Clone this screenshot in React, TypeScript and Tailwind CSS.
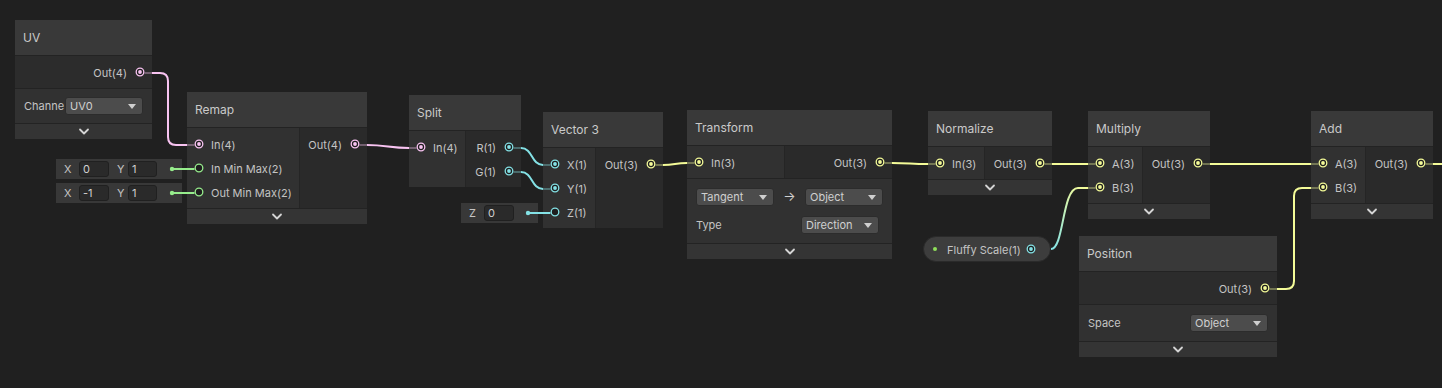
import React from "react";

const V4 = "#f8c3f1";
const V3 = "#f4fb98";
const V2 = "#96ec8c";
const V1 = "#84e2e6";

const Port = ({ color, on = true }: { color: string; on?: boolean }) => (
  <svg width="10" height="10" viewBox="0 0 10 10" className="shrink-0">
    <circle cx="5" cy="5" r="3.8" fill="#1e1e1e" stroke={color} strokeWidth="1.3" />
    {on && <circle cx="5" cy="5" r="1.9" fill={color} />}
  </svg>
);

const Chevron = () => (
  <svg width="12" height="8" viewBox="0 0 12 8">
    <polyline points="2,1.5 6,5.5 10,1.5" fill="none" stroke="#d4d4d4" strokeWidth="1.8" strokeLinecap="round" strokeLinejoin="round" />
  </svg>
);

const Footer = () => (
  <div className="h-4 flex items-center justify-center bg-[#343434] border-t border-[#232323]">
    <Chevron />
  </div>
);

const Header = ({ title }: { title: string }) => (
  <div className="h-9 flex items-center px-2 bg-[#393939] border-b border-[#232323] text-[12px] text-[#cacaca]">
    {title}
  </div>
);

const InRow = ({ label, color, on = true }: { label: string; color: string; on?: boolean }) => (
  <div className="h-6 flex items-center pl-[7px] gap-[7px] whitespace-nowrap">
    <Port color={color} on={on} />
    <span className="relative top-[1px]">{label}</span>
  </div>
);

const OutRow = ({ label, color }: { label: string; color: string }) => (
  <div className="h-6 flex items-center justify-end pr-[7px] gap-[8px] whitespace-nowrap">
    <span className="relative top-[1px]">{label}</span>
    <Port color={color} />
  </div>
);

const Dropdown = ({ value }: { value: string }) => (
  <div className="w-[78px] h-[18px] flex items-center justify-between pl-[4px] pr-[6px] rounded-[3px] bg-[#4c4c4c] border border-[#2c2c2c] text-[#d0d0d0]">
    <span>{value}</span>
    <svg width="8" height="5" viewBox="0 0 8 5">
      <polygon points="0,0 8,0 4,5" fill="#cfcfcf" />
    </svg>
  </div>
);

const Field = ({ value, w }: { value: string; w: string }) => (
  <div className={`${w} h-[16px] flex items-center pl-[3px] rounded-[3px] bg-[#2a2a2a] border border-[#202020] text-[#d0d0d0]`}>
    {value}
  </div>
);

export default function App() {
  return (
    <div
      className="relative w-[1442px] h-[388px] overflow-hidden bg-[#202020] text-[11px] text-[#c4c4c4]"
      style={{ fontFamily: "Inter, 'Noto Sans', sans-serif" }}
    >
      {/* UV */}
      <div className="absolute left-[15px] top-[20px] w-[137px] flex flex-col">
        <Header title="UV" />
        <div className="py-1 bg-[#2c2c2c]">
          <OutRow label="Out(4)" color={V4} />
        </div>
        <div className="h-[35px] flex items-center justify-between pl-[9px] pr-[9px] bg-[#313131] border-t border-[#232323]">
          <span className="whitespace-nowrap">Channe</span>
          <Dropdown value="UV0" />
        </div>
        <Footer />
      </div>

      {/* Remap */}
      <div className="absolute left-[187px] top-[92px] w-[180px] flex flex-col">
        <Header title="Remap" />
        <div className="flex">
          <div className="w-[113px] py-1 bg-[#313131] border-r border-[#252525]">
            <InRow label="In(4)" color={V4} />
            <InRow label="In Min Max(2)" color={V2} on={false} />
            <InRow label="Out Min Max(2)" color={V2} on={false} />
          </div>
          <div className="flex-1 py-1 bg-[#2a2a2a]">
            <OutRow label="Out(4)" color={V4} />
          </div>
        </div>
        <Footer />
      </div>

      {/* Remap inline values */}
      <div className="absolute left-[56px] top-[159px] w-[126px] h-[20px] flex items-center pl-[8px] bg-[#383838]">
        <span className="w-[15px]">X</span>
        <Field value="0" w="w-[30px]" />
        <span className="w-[19px] pl-[8px]">Y</span>
        <Field value="1" w="w-[29px]" />
      </div>
      <div className="absolute left-[56px] top-[183px] w-[126px] h-[20px] flex items-center pl-[8px] bg-[#383838]">
        <span className="w-[15px]">X</span>
        <Field value="-1" w="w-[30px]" />
        <span className="w-[19px] pl-[8px]">Y</span>
        <Field value="1" w="w-[29px]" />
      </div>

      {/* Split */}
      <div className="absolute left-[409px] top-[95px] w-[112px] flex flex-col">
        <Header title="Split" />
        <div className="flex h-[56px]">
          <div className="w-[57px] py-1 bg-[#313131] border-r border-[#252525]">
            <InRow label="In(4)" color={V4} />
          </div>
          <div className="flex-1 py-1 bg-[#2a2a2a]">
            <OutRow label="R(1)" color={V1} />
            <OutRow label="G(1)" color={V1} />
          </div>
        </div>
      </div>

      {/* Vector 3 */}
      <div className="absolute left-[543px] top-[112px] w-[120px] flex flex-col">
        <Header title="Vector 3" />
        <div className="flex">
          <div className="w-[53px] py-1 bg-[#313131] border-r border-[#252525]">
            <InRow label="X(1)" color={V1} />
            <InRow label="Y(1)" color={V1} />
            <InRow label="Z(1)" color={V1} on={false} />
          </div>
          <div className="flex-1 py-1 bg-[#2a2a2a]">
            <OutRow label="Out(3)" color={V3} />
          </div>
        </div>
      </div>

      {/* Vector 3 inline value */}
      <div className="absolute left-[461px] top-[203px] w-[77px] h-[20px] flex items-center pl-[8px] bg-[#383838]">
        <span className="w-[15px]">Z</span>
        <Field value="0" w="w-[30px]" />
      </div>

      {/* Transform */}
      <div className="absolute left-[687px] top-[110px] w-[205px] flex flex-col">
        <Header title="Transform" />
        <div className="flex">
          <div className="w-[98px] py-1 bg-[#313131] border-r border-[#252525]">
            <InRow label="In(3)" color={V3} />
          </div>
          <div className="flex-1 py-1 bg-[#2a2a2a]">
            <OutRow label="Out(3)" color={V3} />
          </div>
        </div>
        <div className="py-1 pl-[9px] pr-[9px] bg-[#313131] border-t border-[#232323]">
          <div className="h-7 flex items-center justify-between">
            <Dropdown value="Tangent" />
            <span className="text-[13px] text-[#cfcfcf]">→</span>
            <Dropdown value="Object" />
          </div>
          <div className="h-7 flex items-center justify-between pr-[4px]">
            <span>Type</span>
            <Dropdown value="Direction" />
          </div>
        </div>
        <Footer />
      </div>

      {/* Normalize */}
      <div className="absolute left-[928px] top-[111px] w-[124px] flex flex-col">
        <Header title="Normalize" />
        <div className="flex">
          <div className="w-[57px] py-1 bg-[#313131] border-r border-[#252525]">
            <InRow label="In(3)" color={V3} />
          </div>
          <div className="flex-1 py-1 bg-[#2a2a2a]">
            <OutRow label="Out(3)" color={V3} />
          </div>
        </div>
        <Footer />
      </div>

      {/* Fluffy Scale property */}
      <div className="absolute left-[923px] top-[236px] w-[128px] h-[26px] flex items-center pl-[9px] pr-[14px] rounded-full bg-[#3d3d3d] border border-[#2a2a2a]">
        <span className="w-[4px] h-[4px] rounded-full bg-[#8fe05a]" />
        <span className="ml-[10px] flex-1 whitespace-nowrap relative top-[1px]">Fluffy Scale(1)</span>
        <Port color={V1} />
      </div>

      {/* Multiply */}
      <div className="absolute left-[1088px] top-[111px] w-[122px] flex flex-col">
        <Header title="Multiply" />
        <div className="flex">
          <div className="w-[55px] py-1 bg-[#313131] border-r border-[#252525]">
            <InRow label="A(3)" color={V3} />
            <InRow label="B(3)" color={V3} />
          </div>
          <div className="flex-1 py-1 bg-[#2a2a2a]">
            <OutRow label="Out(3)" color={V3} />
          </div>
        </div>
        <Footer />
      </div>

      {/* Position */}
      <div className="absolute left-[1079px] top-[236px] w-[198px] flex flex-col">
        <Header title="Position" />
        <div className="py-1 bg-[#2c2c2c]">
          <OutRow label="Out(3)" color={V3} />
        </div>
        <div className="h-[37px] flex items-center justify-between pl-[9px] pr-[9px] bg-[#313131] border-t border-[#232323]">
          <span>Space</span>
          <Dropdown value="Object" />
        </div>
        <Footer />
      </div>

      {/* Add */}
      <div className="absolute left-[1311px] top-[111px] w-[122px] flex flex-col">
        <Header title="Add" />
        <div className="flex">
          <div className="w-[55px] py-1 bg-[#313131] border-r border-[#252525]">
            <InRow label="A(3)" color={V3} />
            <InRow label="B(3)" color={V3} />
          </div>
          <div className="flex-1 py-1 bg-[#2a2a2a]">
            <OutRow label="Out(3)" color={V3} />
          </div>
        </div>
        <Footer />
      </div>

      {/* Edges */}
      <svg className="absolute inset-0 pointer-events-none" width="1442" height="388" viewBox="0 0 1442 388" fill="none" strokeWidth="2">
        <defs>
          <linearGradient id="fluffy" gradientUnits="userSpaceOnUse" x1="1051" y1="249" x2="1088" y2="188">
            <stop offset="0" stopColor={V1} />
            <stop offset="1" stopColor={V3} />
          </linearGradient>
        </defs>

        {/* stubs inside nodes */}
        <g strokeOpacity="0.35">
          <path d="M144.5 73 H152" stroke={V4} />
          <path d="M187 145 H194.5" stroke={V4} />
          <path d="M359.5 145 H367" stroke={V4} />
          <path d="M409 148 H416.5" stroke={V4} />
          <path d="M513.5 148 H521 M513.5 172 H521" stroke={V1} />
          <path d="M543 165 H550.5 M543 189 H550.5" stroke={V1} />
          <path d="M655.5 165 H663" stroke={V3} />
          <path d="M687 163 H694.5" stroke={V3} />
          <path d="M884.5 163 H892 M928 164 H935.5" stroke={V3} />
          <path d="M1044.5 164 H1052 M1088 164 H1095.5 M1088 188 H1095.5" stroke={V3} />
          <path d="M1202.5 164 H1210 M1311 164 H1318.5 M1311 188 H1318.5" stroke={V3} />
          <path d="M1269.5 289 H1277 M1425.5 164 H1433" stroke={V3} />
        </g>

        {/* wires */}
        <path d="M152 73 H160 Q168 73 168 81 V137 Q168 145 176 145 H187" stroke={V4} />
        <path d="M367 145 C386 145 390 148 409 148" stroke={V4} />
        <path d="M521 148 C533 148 531 165 543 165" stroke={V1} />
        <path d="M521 172 C533 172 531 189 543 189" stroke={V1} />
        <path d="M663 165 C675 165 675 163 687 163" stroke={V3} />
        <path d="M892 163 C910 163 910 164 928 164" stroke={V3} />
        <path d="M1052 164 H1088" stroke={V3} />
        <path d="M1051 249 C1064 249 1062 188 1078 188 H1088" stroke="url(#fluffy)" />
        <path d="M1210 164 H1311" stroke={V3} />
        <path d="M1277 289 H1286 Q1294 289 1294 281 V196 Q1294 188 1302 188 H1311" stroke={V3} />
        <path d="M1433 164 H1442" stroke={V3} />

        {/* inline value connections */}
        <path d="M172 169 H194.5 M172 193 H194.5" stroke={V2} />
        <circle cx="172" cy="169" r="2.2" fill={V2} stroke="none" />
        <circle cx="172" cy="193" r="2.2" fill={V2} stroke="none" />
        <path d="M528 213 H550.5" stroke={V1} />
        <circle cx="528" cy="213" r="2.2" fill={V1} stroke="none" />
      </svg>
    </div>
  );
}
